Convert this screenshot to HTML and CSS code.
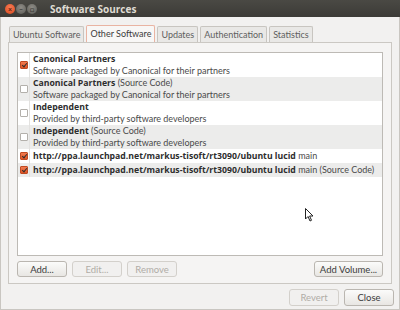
FILE: index.html
```html
<!DOCTYPE html>
<html lang="en">
<head>
    <meta charset="UTF-8">
    <title>Software Sources</title>
    <link rel="stylesheet" href="styles.css">
</head>
<body>
    <div class="window">
        <!-- Barre de titre -->
        <div class="titlebar">
            <div class="controls">
                <span class="ctl ctl-close">&#215;</span>
                <span class="ctl ctl-min">&#8211;</span>
                <span class="ctl ctl-max">&#9633;</span>
            </div>
            <div class="title">Software Sources</div>
        </div>

        <!-- Onglets -->
        <div class="tabs">
            <div class="tab">Ubuntu Software</div>
            <div class="tab active">Other Software</div>
            <div class="tab">Updates</div>
            <div class="tab">Authentication</div>
            <div class="tab">Statistics</div>
        </div>

        <div class="notebook">
            <div class="list">
                <div class="row">
                    <div class="check-cell"><span class="check on"></span></div>
                    <div class="row-text">
                        <div><b>Canonical Partners</b></div>
                        <div>Software packaged by Canonical for their partners</div>
                    </div>
                </div>
                <div class="row alt">
                    <div class="check-cell"><span class="check"></span></div>
                    <div class="row-text">
                        <div><b>Canonical Partners</b> (Source Code)</div>
                        <div>Software packaged by Canonical for their partners</div>
                    </div>
                </div>
                <div class="row">
                    <div class="check-cell"><span class="check"></span></div>
                    <div class="row-text">
                        <div><b>Independent</b></div>
                        <div>Provided by third-party software developers</div>
                    </div>
                </div>
                <div class="row alt">
                    <div class="check-cell"><span class="check"></span></div>
                    <div class="row-text">
                        <div><b>Independent</b> (Source Code)</div>
                        <div>Provided by third-party software developers</div>
                    </div>
                </div>
                <div class="row single">
                    <div class="check-cell"><span class="check on"></span></div>
                    <div class="row-text">
                        <div><b>http://ppa.launchpad.net/markus-tisoft/rt3090/ubuntu lucid</b> main</div>
                    </div>
                </div>
                <div class="row single alt">
                    <div class="check-cell"><span class="check on"></span></div>
                    <div class="row-text">
                        <div><b>http://ppa.launchpad.net/markus-tisoft/rt3090/ubuntu lucid</b> main (Source Code)</div>
                    </div>
                </div>
            </div>

            <div class="list-buttons">
                <button class="btn">Add...</button>
                <button class="btn" disabled>Edit...</button>
                <button class="btn" disabled>Remove</button>
                <button class="btn btn-wide push-right">Add Volume...</button>
            </div>
        </div>

        <div class="dialog-buttons">
            <button class="btn" disabled>Revert</button>
            <button class="btn">Close</button>
        </div>

        <!-- Pointeur de souris -->
        <svg class="cursor" width="10" height="14" viewBox="0 0 10 14">
            <path d="M0.5 0.5 L0.5 11 L3 8.5 L5 13 L6.5 12.3 L4.6 8 L8 8 Z" fill="#fff" stroke="#222" stroke-width="1"/>
        </svg>
    </div>
</body>
</html>
```

FILE: styles.css
```css
/* Reset de base */
* {
    margin: 0;
    padding: 0;
    box-sizing: border-box;
}

body {
    font-family: Lato, 'DejaVu Sans', sans-serif;
    font-size: 9px;
    color: #3c3c3c;
    background: #fff;
}

/* Fenêtre */
.window {
    position: relative;
    width: 400px;
    height: 310px;
    background: #f2f1f0;
    border-left: 1px solid #c9c6c1;
    border-right: 1px solid #c9c6c1;
    border-bottom: 1px solid #c9c6c1;
}

/* Barre de titre */
.titlebar {
    height: 17px;
    background: linear-gradient(#4a4944, #3c3b37);
    display: flex;
    align-items: center;
    padding-left: 5px;
    margin: 0 -1px;
}

.controls {
    display: flex;
    gap: 1px;
}

.ctl {
    width: 10px;
    height: 10px;
    border-radius: 50%;
    font-size: 7px;
    line-height: 10px;
    text-align: center;
    font-weight: 700;
    color: #3c3b37;
    background: radial-gradient(circle at 50% 35%, #8e8c86, #5b5a55);
}

.ctl-close {
    background: radial-gradient(circle at 50% 35%, #f77b55, #d9481c);
    color: #5a1c0a;
}

.title {
    margin-left: 13px;
    color: #dfdbd2;
    font-weight: 700;
    font-size: 10px;
    font-family: 'Open Sans', sans-serif;
}

/* Onglets */
.tabs {
    display: flex;
    align-items: flex-end;
    gap: 2px;
    margin: 8px 0 0 8px;
    height: 17px;
}

.tab {
    height: 16px;
    padding: 0 3px;
    line-height: 15px;
    font-size: 9px;
    color: #5e5e5e;
    background: #e9e8e6;
    border: 1px solid #c8c5c0;
    border-bottom: none;
    border-radius: 2px 2px 0 0;
}

.tab.active {
    height: 17px;
    line-height: 16px;
    background: #f8f7f6;
    border-color: #e9b4a3;
    color: #3c3c3c;
}

/* Cadre du notebook */
.notebook {
    margin: 0 7px 0 7px;
    height: 242px;
    border: 1px solid #cbc8c3;
    background: #f5f4f3;
    padding: 9px 8px 0 8px;
}

.list {
    height: 204px;
    background: #fff;
    border: 1px solid #bdbab5;
    overflow: hidden;
}

.row {
    display: flex;
    height: 24px;
}

.row.single {
    height: 14px;
}

.row.alt {
    background: #ececeb;
}

.check-cell {
    flex-shrink: 0;
    width: 12px;
    border-right: 1px solid #e3e2e0;
    display: flex;
    justify-content: center;
    align-items: center;
}

.check {
    width: 8px;
    height: 8px;
    border: 1px solid #b3b0ab;
    border-radius: 1px;
    background: #fff;
    position: relative;
}

.check.on {
    background: linear-gradient(#f27a4e, #dd5426);
    border-color: #c04a21;
}

.check.on::after {
    content: "";
    position: absolute;
    left: 2px;
    top: 0;
    width: 2px;
    height: 4px;
    border-right: 1px solid #2e2e2e;
    border-bottom: 1px solid #2e2e2e;
    transform: rotate(40deg);
}

.row-text {
    padding: 0 0 0 3px;
    line-height: 12px;
    white-space: nowrap;
    display: flex;
    flex-direction: column;
    justify-content: center;
    color: #4a4a4a;
}

.row-text b {
    font-family: 'Open Sans', sans-serif;
    font-size: 8.7px;
    font-weight: 700;
    color: #2e2e2e;
}

/* Boutons */
.list-buttons {
    display: flex;
    gap: 5px;
    margin-top: 5px;
}

.push-right {
    margin-left: auto;
}

.btn {
    font-family: inherit;
    font-size: 9.5px;
    width: 50px;
    height: 16px;
    color: #3c3c3c;
    background: linear-gradient(#fbfbfa, #e8e6e3);
    border: 1px solid #bab6b0;
    border-radius: 3px;
}

.btn-wide {
    width: 69px;
}

.btn:disabled {
    color: #b0aca6;
    background: #f1f0ef;
    border-color: #d3d0cb;
}

.dialog-buttons {
    display: flex;
    justify-content: flex-end;
    gap: 5px;
    margin: 5px 5px 0 0;
}

.dialog-buttons .btn {
    height: 17px;
}

.cursor {
    position: absolute;
    left: 304px;
    top: 208px;
}
```
